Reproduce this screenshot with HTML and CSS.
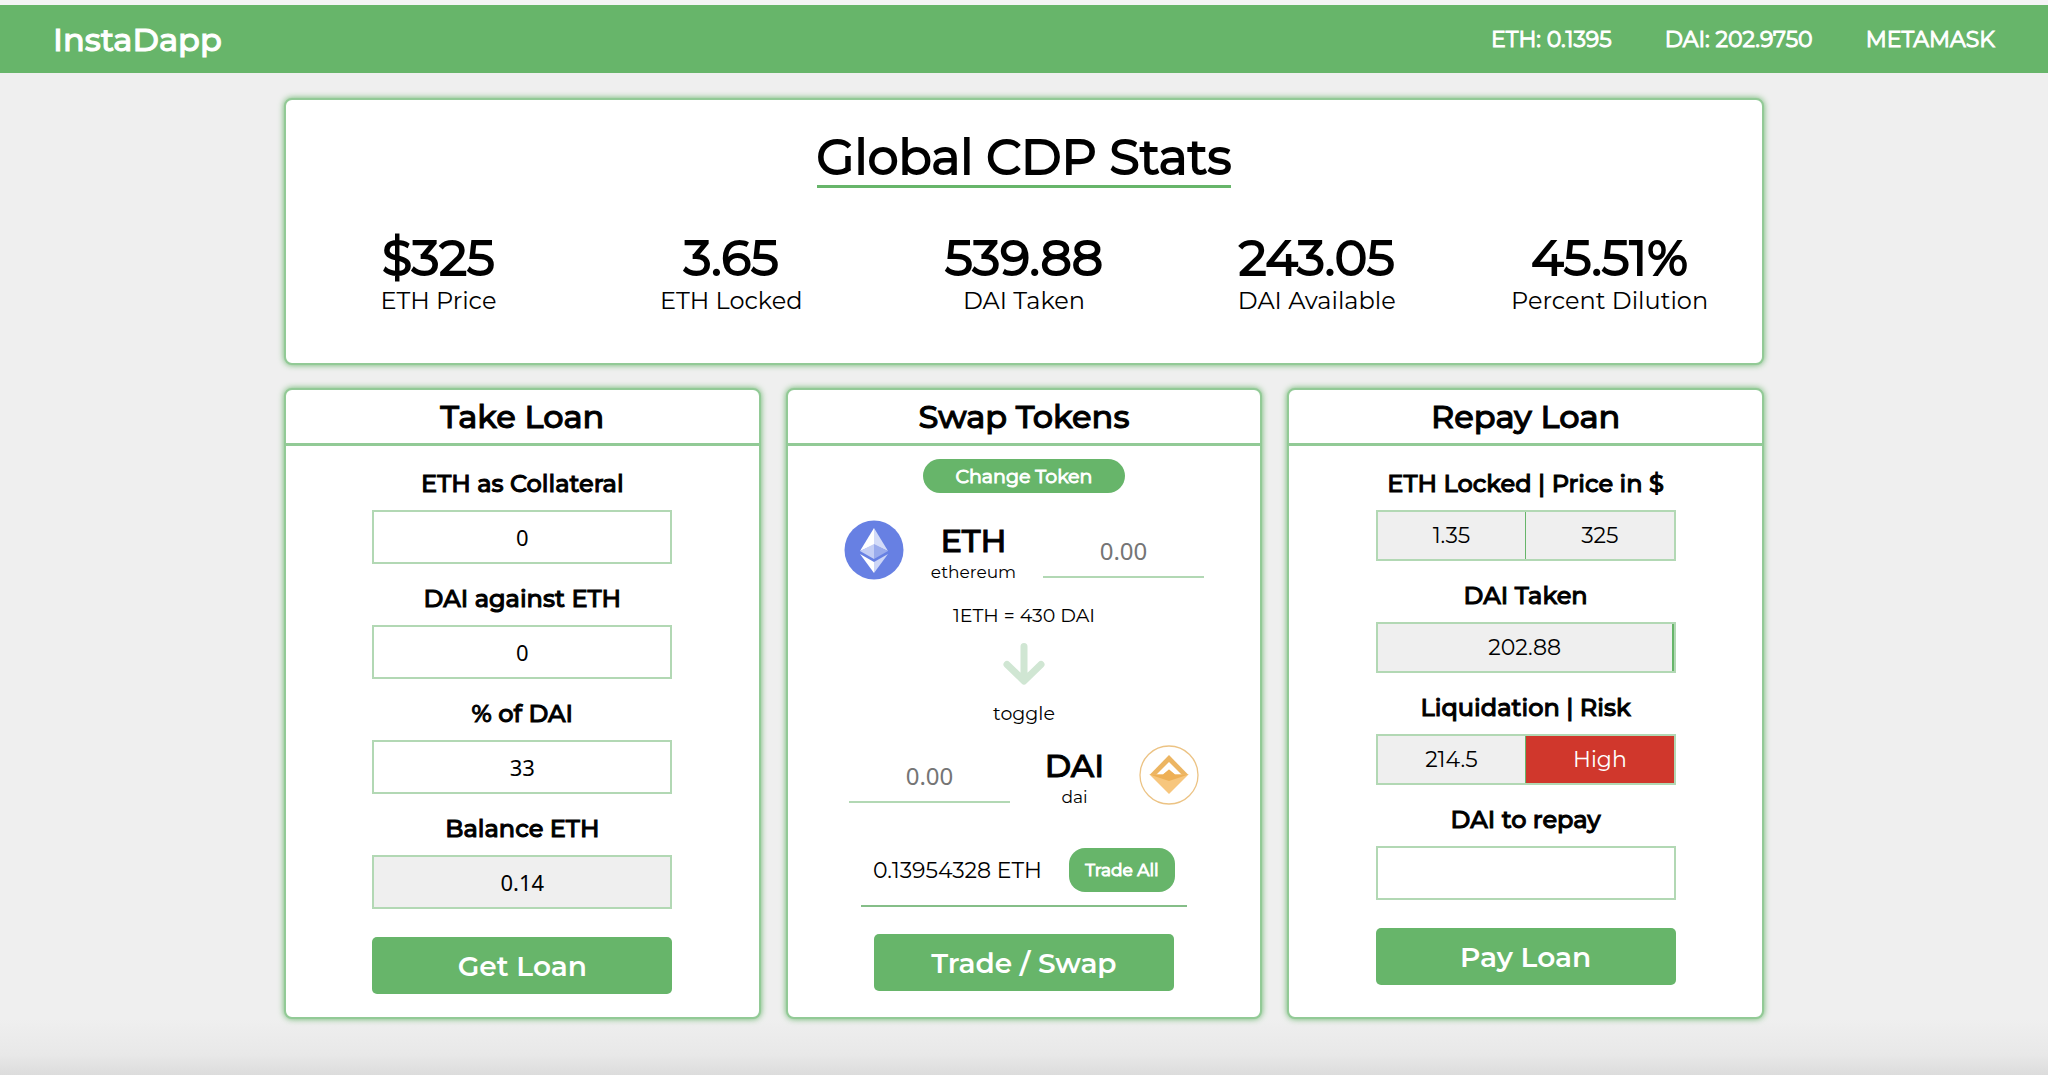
FILE: index.html
```html
<!DOCTYPE html>
<html lang="en">
<head>
    <meta charset="UTF-8">
    <meta name="viewport" content="width=device-width, initial-scale=1.0">
    <title>InstaDapp</title>
    <link rel="stylesheet" href="styles.css">
</head>
<body>
    <nav class="navbar">
        <a href="#" class="brand">InstaDapp</a>
        <div class="nav-items">
            <span>ETH: 0.1395</span>
            <span>DAI: 202.9750</span>
            <a href="#">METAMASK</a>
        </div>
    </nav>

    <main class="container">
        <!-- Global stats -->
        <section class="card stats">
            <h1>Global CDP Stats</h1>
            <div class="stats-row">
                <div class="stat"><strong>$325</strong><span>ETH Price</span></div>
                <div class="stat"><strong>3.65</strong><span>ETH Locked</span></div>
                <div class="stat"><strong>539.88</strong><span>DAI Taken</span></div>
                <div class="stat"><strong>243.05</strong><span>DAI Available</span></div>
                <div class="stat"><strong>45.51%</strong><span>Percent Dilution</span></div>
            </div>
        </section>

        <div class="panels">
            <!-- Take loan -->
            <section class="card panel">
                <h2>Take Loan</h2>
                <form class="loan-form">
                    <div class="field">
                        <label for="eth-collateral">ETH as Collateral</label>
                        <input type="text" id="eth-collateral" value="0">
                    </div>
                    <div class="field">
                        <label for="dai-against">DAI against ETH</label>
                        <input type="text" id="dai-against" value="0">
                    </div>
                    <div class="field">
                        <label for="dai-percent">% of DAI</label>
                        <input type="text" id="dai-percent" value="33">
                    </div>
                    <div class="field">
                        <label for="eth-balance">Balance ETH</label>
                        <input type="text" id="eth-balance" value="0.14" readonly>
                    </div>
                    <button type="button" class="btn-main">Get Loan</button>
                </form>
            </section>

            <!-- Swap tokens -->
            <section class="card panel">
                <h2>Swap Tokens</h2>
                <form class="swap-form">
                    <button type="button" class="btn-change">Change Token</button>
                    <div class="token-row">
                        <svg class="token-icon" viewBox="0 0 60 60" aria-hidden="true">
                            <circle cx="30" cy="30" r="29.500" fill="#6780e3"/>
                            <path d="M30 8 16 31 30 25z" fill="#fff"/>
                            <path d="M30 8 44 31 30 25z" fill="#d3dbf8"/>
                            <path d="M30 24 16 31 30 39z" fill="#c4cef5"/>
                            <path d="M30 24 44 31 30 39z" fill="#9aabec"/>
                            <path d="M16 34 30 42V53z" fill="#fff"/>
                            <path d="M44 34 30 42V53z" fill="#cdd6f7"/>
                        </svg>
                        <label class="token-name" for="eth-amount"><b>ETH</b><span>ethereum</span></label>
                        <input type="text" id="eth-amount" placeholder="0.00">
                    </div>
                    <p class="rate">1ETH = 430 DAI</p>
                    <button type="button" class="toggle">
                        <svg viewBox="0 0 42 42" aria-hidden="true">
                            <path d="M21 3.500V36M4 21.500 21 38 38 21.500" fill="none" stroke="#d0e6d3" stroke-width="7" stroke-linecap="round" stroke-linejoin="round"/>
                        </svg>
                        <span>toggle</span>
                    </button>
                    <div class="token-row token-row-to">
                        <input type="text" id="dai-amount" placeholder="0.00">
                        <label class="token-name" for="dai-amount"><b>DAI</b><span>dai</span></label>
                        <svg class="token-icon" viewBox="0 0 60 60" aria-hidden="true">
                            <circle cx="30" cy="30" r="29" fill="#fff" stroke="#ecc384" stroke-width="1.300"/>
                            <path d="M30 10 49.500 30H10.500z" fill="#ecb562"/>
                            <path d="M30 17 43 30H17z" fill="#fff"/>
                            <path d="M10.500 29.500H24L30 24.500 36 29.500H49.500L30 49z" fill="#f7c67d"/>
                            <path d="M10.500 29.500H24L30 24.500 36 29.500H49.500L30 36z" fill="#eeb056"/>
                        </svg>
                    </div>
                    <div class="balance-row">
                        <span>0.13954328 ETH</span>
                        <button type="button" class="btn-all">Trade All</button>
                    </div>
                    <button type="button" class="btn-main">Trade / Swap</button>
                </form>
            </section>

            <!-- Repay loan -->
            <section class="card panel">
                <h2>Repay Loan</h2>
                <form class="loan-form">
                    <div class="field">
                        <h3>ETH Locked | Price in $</h3>
                        <div class="readout"><span>1.35</span><span>325</span></div>
                    </div>
                    <div class="field">
                        <h3>DAI Taken</h3>
                        <div class="readout single"><span>202.88</span></div>
                    </div>
                    <div class="field">
                        <h3>Liquidation | Risk</h3>
                        <div class="readout"><span>214.5</span><span class="risk-high">High</span></div>
                    </div>
                    <div class="field">
                        <label for="dai-repay">DAI to repay</label>
                        <input type="text" id="dai-repay">
                    </div>
                    <button type="button" class="btn-main">Pay Loan</button>
                </form>
            </section>
        </div>
    </main>
</body>
</html>
```
FILE: styles.css
```css
:root {
    --green: #67b56a;
    --green-border: #92ca96;
    --green-light: #b2d8b4;
    --grey: #efefef;
}

* {
    box-sizing: border-box;
}

body {
    margin: 0;
    min-height: 100vh;
    border-top: 5px solid #f4f4f5;
    font-family: Montserrat, Inter, sans-serif;
    color: #000;
    background: linear-gradient(to top, #dcdcdc, #e8e8e8 20px, var(--grey) 56px) no-repeat var(--grey);
}

h1, h2, h3, p {
    margin: 0;
}

input {
    font-family: "Noto Sans", sans-serif;
    color: inherit;
}

button {
    border: none;
    padding: 0;
    font-family: inherit;
    color: inherit;
    cursor: pointer;
}

.nav-items,
.btn-change,
.btn-all {
    font-weight: 400;
    -webkit-text-stroke: 1px currentColor;
}

.brand,
.panel h2,
.field label,
.field h3,
.token-name b {
    font-weight: 500;
    -webkit-text-stroke: 1px currentColor;
}

.stats h1,
.stat strong {
    font-size: 49px;
    font-weight: 400;
    -webkit-text-stroke: 2px currentColor;
}

/* Navbar */
.navbar {
    display: flex;
    justify-content: space-between;
    align-items: center;
    height: 68px;
    padding: 1px 53px 0;
    background-color: var(--green);
    color: white;
}

.navbar a {
    color: white;
    text-decoration: none;
}

.brand {
    font-size: 32px;
}

.nav-items {
    display: flex;
    gap: 53px;
    font-size: 22px;
}

.container {
    width: 94%;
    max-width: 1480px;
    margin: 0 auto;
    padding: 25px 0 56px;
}

.card {
    background-color: white;
    border: 2px solid var(--green-border);
    border-radius: 8px;
    box-shadow: 0 0 6px var(--green);
}

/* Stats */
.stats {
    padding: 29px 6px 48px;
    text-align: center;
}

.stats h1 {
    display: inline-block;
    line-height: 56px;
    border-bottom: 3px solid var(--green);
}

.stats-row {
    display: flex;
    margin-top: 40px;
}

.stat {
    flex: 1;
    display: flex;
    flex-direction: column;
}

.stat strong {
    line-height: 59px;
}

.stat span {
    font-size: 24px;
    line-height: 28px;
}

/* Panels */
.panels {
    display: grid;
    grid-template-columns: repeat(3, 1fr);
    gap: 25px;
    margin-top: 23px;
}

.panel h2 {
    font-size: 32px;
    line-height: 53px;
    text-align: center;
    border-bottom: 3px solid var(--green-border);
}

.loan-form {
    display: flex;
    flex-direction: column;
    gap: 20px;
    width: 300px;
    margin: 0 auto;
    padding: 23px 0;
}

.field {
    display: flex;
    flex-direction: column;
    gap: 11px;
    text-align: center;
}

.field label, .field h3 {
    font-size: 24px;
    line-height: 30px;
}

.field input {
    width: 100%;
    height: 54px;
    border: 2px solid var(--green-light);
    font-size: 22px;
    text-align: center;
    background-color: white;
}

.field input:read-only {
    background-color: var(--grey);
}

.readout {
    display: flex;
    height: 51px;
    border: 2px solid var(--green-light);
    background-color: var(--grey);
    font-size: 22px;
    line-height: 47px;
}

.readout span {
    flex: 1;
}

.readout span:first-child {
    border-right: 1px solid var(--green);
}

.readout.single span {
    border-right-width: 2px;
}

.readout .risk-high {
    background-color: #d0372c;
    color: white;
}

.btn-main {
    width: 300px;
    height: 57px;
    border-radius: 5px;
    background-color: var(--green);
    color: white;
    font-size: 28px;
    font-weight: 600;
}

.loan-form .btn-main {
    margin-top: 8px;
}

/* Swap */
.swap-form {
    display: flex;
    flex-direction: column;
    align-items: center;
    padding: 13px 0 24px;
}

.btn-change {
    width: 202px;
    height: 34px;
    border-radius: 17px;
    background-color: var(--green);
    color: white;
    font-size: 19px;
}

.token-row {
    display: flex;
    justify-content: space-between;
    width: 360px;
    height: 60px;
    margin-top: 27px;
}

.token-icon {
    width: 60px;
    height: 60px;
}

.token-name {
    display: flex;
    flex-direction: column;
    align-items: center;
    width: 82px;
}

.token-name b {
    font-size: 32px;
    line-height: 42px;
}

.token-name span {
    font-size: 17px;
    line-height: 20px;
}

.token-row input {
    width: 161px;
    height: 58px;
    padding: 4px 0 0;
    border: none;
    border-bottom: 2px solid var(--green-light);
    background: none;
    font-size: 24px;
    text-align: center;
}

.token-row input::placeholder {
    color: #757575;
}

.rate {
    margin-top: 24px;
    font-size: 19px;
    line-height: 24px;
}

.toggle {
    display: flex;
    flex-direction: column;
    align-items: center;
    gap: 17px;
    margin-top: 15px;
    background: none;
    font-size: 19px;
    line-height: 24px;
}

.toggle svg {
    width: 42px;
    height: 42px;
}

.token-row-to {
    width: 350px;
    margin-top: 19px;
}

.balance-row {
    display: flex;
    justify-content: center;
    align-items: center;
    gap: 27px;
    width: 326px;
    margin-top: 43px;
    padding-bottom: 13px;
    border-bottom: 2px solid #85be88;
    font-size: 22px;
}

.btn-all {
    width: 106px;
    height: 44px;
    border-radius: 16px;
    background-color: var(--green);
    color: white;
    font-size: 17px;
}

.swap-form .btn-main {
    margin-top: 27px;
}

@media (max-width: 1300px) {
    .panels {
        grid-template-columns: 1fr;
    }

    .stats-row {
        flex-wrap: wrap;
    }
}
```
